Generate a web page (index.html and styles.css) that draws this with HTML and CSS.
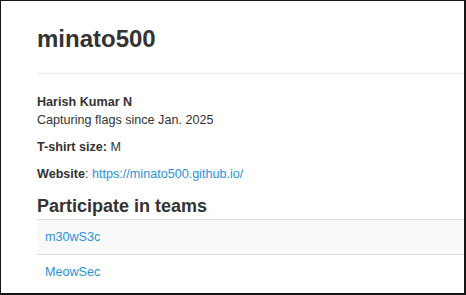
FILE: index.html
```html
<!DOCTYPE html>
<html>
<head lang="en">
    <meta charset="UTF-8">
    <title>minato500</title>
    <link rel="stylesheet" href="styles.css">
</head>
<body>
<div id="frame">
    <div class="container">
        <h1 class="user-name">minato500</h1>
        <hr class="divider">
        <p class="info">
            <b>Harish Kumar N</b><br>
            Capturing flags since Jan. 2025
        </p>
        <p class="info"><b>T-shirt size:</b> M</p>
        <p class="info"><b>Website</b>: <a href="https://minato500.github.io/">https://minato500.github.io/</a></p>
        <h3 class="teams-title">Participate in teams</h3>
        <table class="teams">
            <tr class="odd"><td><a href="#">m30wS3c</a></td></tr>
            <tr><td><a href="#">MeowSec</a></td></tr>
        </table>
    </div>
</div>
</body>
</html>
```

FILE: styles.css
```css
*{
    padding: 0;
    margin: 0;
    box-sizing: border-box;
}
html, body{
    width: 466px;
    height: 295px;
    overflow: hidden;
    background: #fff;
}
body{
    font-family: "Liberation Sans", Arial, sans-serif;
    font-size: 12.6px;
    line-height: 18px;
    color: #333;
}
#frame{
    width: 466px;
    height: 295px;
    border-top: 1px solid #151515;
    border-left: 1px solid #151515;
    border-right: 2px solid #151515;
    border-bottom: 2px solid #151515;
    overflow: hidden;
}
.container{
    padding: 25px 0 0 36px;
}
.user-name{
    font-size: 24px;
    line-height: 26px;
    font-weight: bold;
    color: #333;
}
.divider{
    border: 0;
    border-top: 1px solid #eee;
    margin: 21px 0 19px;
}
.info{
    margin-bottom: 9px;
}
a{
    color: #2a93d5;
    text-decoration: none;
}
.teams-title{
    font-size: 18px;
    line-height: 20px;
    font-weight: bold;
    margin: 13px 0 3px;
}
.teams{
    width: 100%;
    border-collapse: collapse;
}
.teams td{
    padding: 8px;
    border-top: 1px solid #ddd;
}
.teams .odd{
    background-color: #f9f9f9;
}
```
